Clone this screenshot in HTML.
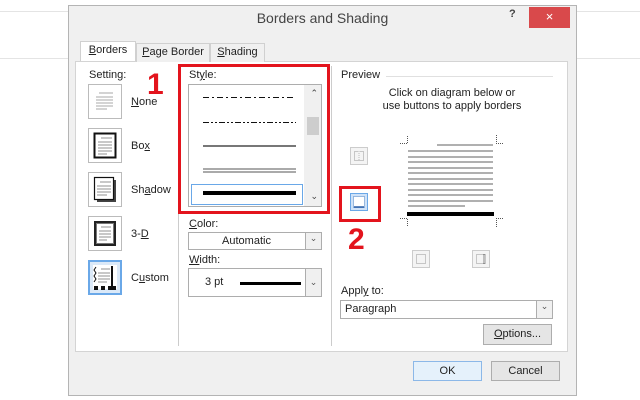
<!DOCTYPE html>
<html><head><meta charset="utf-8"><style>
*{margin:0;padding:0;box-sizing:border-box}
body{width:640px;height:400px;background:#fff;position:relative;overflow:hidden;font-family:"Liberation Sans",sans-serif;font-size:11px;color:#222}
.a{position:absolute}
.dlg{left:68px;top:5px;width:509px;height:391px;background:#f0f0f0;border:1px solid #b4b4b4}
.panel{left:75px;top:61px;width:493px;height:291px;background:#fff;border:1px solid #d4d4d4}
.tab{top:43px;height:19px;border:1px solid #d0d0d0;border-bottom:none;background:#f0f0f0;font-size:11px;padding-top:2px;text-align:center}
.sel{background:#fff;height:20px;top:41px}
.ic{width:34px;height:35px;border:1px solid #bbb;background:#fff}
.lbl{font-size:11px}
.combo{border:1px solid #adadad;background:#fff}
.dd{position:absolute;right:0;top:0;bottom:0;width:16px;border-left:1px solid #adadad;background:#f0f0f0;text-align:center;font-size:9px;color:#555}
.btn{border:1px solid #adadad;background:#e5e5e5;text-align:center;font-size:11px}
.red{border:3px solid #e3141d}
.big{color:#e3141d;font-weight:bold;font-size:30px;font-family:"Liberation Sans",sans-serif}
.pl{height:2px;background:#b0b0b0;left:408px;width:85px}
.sb{width:18px;height:18px;border:1px solid #ccc;background:#f4f4f4}
</style></head><body>
<div class="a" style="left:0;top:11px;width:640px;height:1px;background:#e4e4e4"></div>
<div class="a" style="left:0;top:58px;width:68px;height:1px;background:#e4e4e4"></div>
<div class="a" style="left:577px;top:58px;width:63px;height:1px;background:#e4e4e4"></div>
<div class="a dlg"></div>
<div class="a" style="left:68px;top:10px;width:509px;text-align:center;font-size:14px;color:#444">Borders and Shading</div>
<div class="a" style="left:509px;top:8px;font-size:11px;font-weight:bold;color:#444">?</div>
<div class="a" style="left:529px;top:7px;width:41px;height:21px;background:#d9494b;color:#fff;text-align:center;font-size:13px;line-height:20px">×</div>
<div class="a panel"></div>
<div class="a tab sel" style="left:80px;width:56px"><u>B</u>orders</div>
<div class="a tab" style="left:136px;width:74px"><u>P</u>age Border</div>
<div class="a tab" style="left:210px;width:55px"><u>S</u>hading</div>
<div class="a" style="left:75px;top:61px;width:5px;height:1px;background:#d4d4d4"></div>
<div class="a lbl" style="left:89px;top:69px">Setting:</div>
<div class="a" style="left:178px;top:66px;width:1px;height:280px;background:#ccc"></div>
<div class="a" style="left:331px;top:66px;width:1px;height:280px;background:#ccc"></div>
<!-- setting icons -->
<div class="a ic" style="left:88px;top:84px"><svg width="32" height="33"><g stroke="#bbb" stroke-width="1.3"><line x1="10" y1="8" x2="24" y2="8"/><line x1="7" y1="12" x2="24" y2="12"/><line x1="7" y1="15" x2="24" y2="15"/><line x1="7" y1="18" x2="24" y2="18"/><line x1="7" y1="21" x2="24" y2="21"/><line x1="7" y1="24" x2="18" y2="24"/></g></svg></div>
<div class="a lbl" style="left:131px;top:96px"><u>N</u>one</div>
<div class="a ic" style="left:88px;top:128px"><svg width="32" height="33"><rect x="5.5" y="4.5" width="21" height="24" fill="none" stroke="#111" stroke-width="2"/><g stroke="#aaa" stroke-width="1.3"><line x1="12" y1="9" x2="23" y2="9"/><line x1="9" y1="13" x2="23" y2="13"/><line x1="9" y1="16" x2="23" y2="16"/><line x1="9" y1="19" x2="23" y2="19"/><line x1="9" y1="22" x2="23" y2="22"/><line x1="9" y1="25" x2="18" y2="25"/></g></svg></div>
<div class="a lbl" style="left:131px;top:140px">Bo<u>x</u></div>
<div class="a ic" style="left:88px;top:172px"><svg width="32" height="33"><rect x="8" y="7" width="19" height="22" fill="#444"/><rect x="5.5" y="4.5" width="19" height="22" fill="#fff" stroke="#111" stroke-width="1.2"/><g stroke="#aaa" stroke-width="1.3"><line x1="11" y1="9" x2="22" y2="9"/><line x1="8" y1="13" x2="22" y2="13"/><line x1="8" y1="16" x2="22" y2="16"/><line x1="8" y1="19" x2="22" y2="19"/><line x1="8" y1="22" x2="18" y2="22"/></g></svg></div>
<div class="a lbl" style="left:131px;top:184px">Sh<u>a</u>dow</div>
<div class="a ic" style="left:88px;top:216px"><svg width="32" height="33"><rect x="5" y="4" width="22" height="25" fill="#222"/><rect x="7.5" y="6.5" width="17" height="20" fill="#fff" stroke="#777"/><g stroke="#aaa" stroke-width="1.3"><line x1="12" y1="10" x2="22" y2="10"/><line x1="10" y1="14" x2="22" y2="14"/><line x1="10" y1="17" x2="22" y2="17"/><line x1="10" y1="20" x2="22" y2="20"/><line x1="10" y1="23" x2="18" y2="23"/></g></svg></div>
<div class="a lbl" style="left:131px;top:228px">3-<u>D</u></div>
<div class="a ic" style="left:88px;top:260px;border:2px solid #6aa8e8;background:#dbe9f8"><svg width="30" height="31"><rect x="3" y="3" width="24" height="24" fill="#fff"/><polyline points="6,5 4,8 6,11 4,14 6,17 4,20" fill="none" stroke="#111" stroke-width="1"/><line x1="22" y1="4" x2="22" y2="24" stroke="#111" stroke-width="2"/><g stroke="#aaa" stroke-width="1.3"><line x1="11" y1="7" x2="20" y2="7"/><line x1="8" y1="11" x2="20" y2="11"/><line x1="8" y1="14" x2="20" y2="14"/><line x1="8" y1="17" x2="20" y2="17"/><line x1="8" y1="20" x2="17" y2="20"/></g><g fill="#111"><rect x="4" y="24" width="4" height="4"/><rect x="11" y="24" width="4" height="4"/><rect x="18" y="24" width="4" height="4"/><rect x="22" y="24" width="4" height="4"/></g></svg></div>
<div class="a lbl" style="left:131px;top:272px">C<u>u</u>stom</div>
<!-- style -->
<div class="a lbl" style="left:189px;top:69px">St<u>y</u>le:</div>
<div class="a combo" style="left:188px;top:84px;width:134px;height:123px">
<div class="a" style="right:0;top:0;width:17px;height:121px;background:#f0f0f0"></div>
<div class="a" style="right:3px;top:3px;font-size:9px;color:#444">&#8963;</div>
<div class="a" style="right:2px;top:32px;width:12px;height:18px;background:#cdcdcd"></div>
<div class="a" style="right:3px;top:106px;font-size:9px;color:#444">&#8964;</div>
<svg class="a" style="left:0;top:0" width="116" height="121"><g stroke="#111" stroke-width="1"><line x1="14" y1="12.5" x2="107" y2="12.5" stroke-dasharray="6,3,2,3"/><line x1="14" y1="37.5" x2="107" y2="37.5" stroke-dasharray="6,2,2,2,2,2"/></g><line x1="14" y1="61" x2="107" y2="61" stroke="#777" stroke-width="2"/><line x1="14" y1="84" x2="107" y2="84" stroke="#777" stroke-width="1.2"/><line x1="14" y1="87" x2="107" y2="87" stroke="#777" stroke-width="1.2"/><rect x="2.5" y="99.5" width="111" height="20" fill="none" stroke="#6aa8e8"/><line x1="14" y1="108" x2="107" y2="108" stroke="#000" stroke-width="4"/></svg>
</div>
<div class="a red" style="left:178px;top:64px;width:152px;height:150px"></div>
<div class="a big" style="left:147px;top:68px">1</div>
<div class="a lbl" style="left:189px;top:218px"><u>C</u>olor:</div>
<div class="a combo" style="left:188px;top:232px;width:134px;height:18px"><div style="position:absolute;left:0;right:17px;top:2px;text-align:center">Automatic</div><div class="dd">&#8964;</div></div>
<div class="a lbl" style="left:189px;top:254px"><u>W</u>idth:</div>
<div class="a combo" style="left:188px;top:268px;width:134px;height:29px"><div style="position:absolute;left:16px;top:7px">3 pt</div><div style="position:absolute;left:51px;top:13px;width:61px;height:3px;background:#000"></div><div class="dd" style="padding-top:8px">&#8964;</div></div>
<!-- preview -->
<div class="a lbl" style="left:341px;top:69px">Preview</div>
<div class="a" style="left:386px;top:76px;width:167px;height:1px;background:#e0e0e0"></div>
<div class="a lbl" style="left:340px;top:87px;width:224px;text-align:center;line-height:13px">Click on diagram below or<br>use buttons to apply borders</div>
<div class="a" style="left:437px;top:144px;width:56px;height:2px;background:#b0b0b0"></div>
<div class="a pl" style="top:150px"></div><div class="a pl" style="top:155.5px"></div><div class="a pl" style="top:161px"></div><div class="a pl" style="top:166.5px"></div><div class="a pl" style="top:172px"></div><div class="a pl" style="top:177.5px"></div><div class="a pl" style="top:183px"></div><div class="a pl" style="top:188.5px"></div><div class="a pl" style="top:194px"></div><div class="a pl" style="top:199.5px"></div>
<div class="a pl" style="top:205px;width:57px"></div>
<div class="a" style="left:407px;top:212px;width:87px;height:4px;background:#000"></div>
<svg class="a" style="left:398px;top:133px" width="108" height="95"><g stroke="#555" stroke-dasharray="1,1" fill="none"><polyline points="2,10.5 9.5,10.5 9.5,2"/><polyline points="98.5,2 98.5,10.5 106,10.5"/><polyline points="2,85.5 9.5,85.5 9.5,94"/><polyline points="98.5,94 98.5,85.5 106,85.5"/></g></svg>
<div class="a sb" style="left:350px;top:147px"><svg width="16" height="16"><rect x="3.5" y="3.5" width="9" height="9" fill="none" stroke="#999" stroke-dasharray="1,1"/><line x1="8" y1="3" x2="8" y2="13" stroke="#bbb" stroke-dasharray="1,1"/></svg></div>
<div class="a sb" style="left:350px;top:193px;border-color:#6aa8e8;background:#cfe2f8"><svg width="16" height="16"><rect x="2.5" y="2.5" width="11" height="11" fill="#fff" stroke="#4a7fc0" stroke-dasharray="1,1"/><line x1="3" y1="13" x2="13" y2="13" stroke="#2a5fa8" stroke-width="1.5"/></svg></div>
<div class="a red" style="left:339px;top:186px;width:42px;height:36px"></div>
<div class="a big" style="left:348px;top:223px">2</div>
<div class="a sb" style="left:412px;top:250px"><svg width="16" height="16"><rect x="3.5" y="3.5" width="9" height="9" fill="none" stroke="#999" stroke-dasharray="1,1"/></svg></div>
<div class="a sb" style="left:472px;top:250px"><svg width="16" height="16"><rect x="3.5" y="3.5" width="9" height="9" fill="none" stroke="#999" stroke-dasharray="1,1"/><line x1="11" y1="3" x2="11" y2="13" stroke="#888"/></svg></div>
<div class="a lbl" style="left:341px;top:285px">Appl<u>y</u> to:</div>
<div class="a combo" style="left:340px;top:300px;width:213px;height:19px"><div style="position:absolute;left:4px;top:2px">Paragraph</div><div class="dd">&#8964;</div></div>
<div class="a btn" style="left:483px;top:324px;width:69px;height:21px;line-height:19px"><u>O</u>ptions...</div>
<div class="a btn" style="left:413px;top:361px;width:69px;height:20px;line-height:18px;border-color:#8cb8e8;background:#e5f1fb">OK</div>
<div class="a btn" style="left:491px;top:361px;width:69px;height:20px;line-height:18px">Cancel</div>
</body></html>
